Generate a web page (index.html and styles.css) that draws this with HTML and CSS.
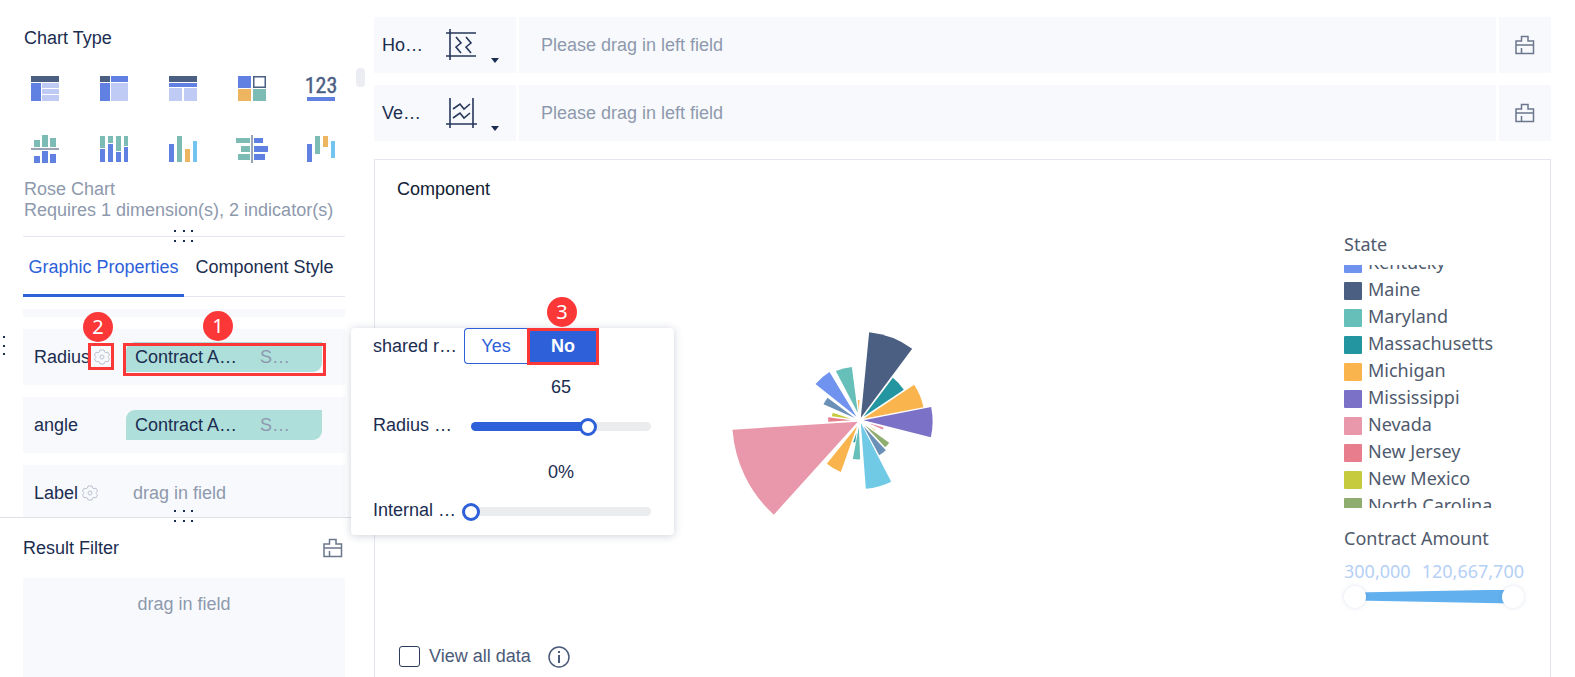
FILE: index.html
```html
<!DOCTYPE html>
<html lang="en">
<head>
    <meta charset="UTF-8">
    <meta name="viewport" content="width=device-width, initial-scale=1.0">
    <title>Rose Chart</title>
    <link rel="stylesheet" href="styles.css">
</head>
<body>
    <!-- Shared icons -->
    <svg class="sprite" aria-hidden="true">
        <symbol id="brush" viewBox="0 0 20 20">
            <path d="M1 18.500V6H6.500V1.500H13V6H18.500V18.500ZM1 10H18.500M6.500 18V13" fill="none" stroke="currentColor" stroke-width="1.500"/>
        </symbol>
        <symbol id="gear" viewBox="0 0 16 16">
            <path d="M6 1H10L10.600 3L12 3.700L14 3.200L15.500 6L14.200 7.500V8.500L15.500 10L14 12.800L12 12.300L10.600 13L10 15H6L5.400 13L4 12.300L2 12.800L.5 10L1.800 8.500V7.500L.5 6L2 3.200L4 3.700L5.400 3Z" fill="none" stroke="currentColor" stroke-linejoin="round"/>
            <circle cx="8" cy="8" r="2" fill="none" stroke="currentColor"/>
        </symbol>
        <symbol id="dots" viewBox="0 0 20 12">
            <path d="M0 0h2v2h-2zM9 0h2v2h-2zM17 0h2v2h-2zM0 10h2v2h-2zM9 10h2v2h-2zM17 10h2v2h-2z" fill="currentColor"/>
        </symbol>
    </svg>

    <div class="designer">
        <aside class="sidebar">
            <section class="chart-types">
                <h2>Chart Type</h2>
                <div class="type-grid">
                    <button aria-label="Group table"><svg viewBox="0 0 28 28"><path fill="#4b5f83" d="M0 1h28v6H0z"/><path fill="#6080e2" d="M0 8h10v18H0z"/><path fill="#bfcbf5" d="M11 8h17v5H11zM11 14h17v5H11zM11 20h17v6H11z"/></svg></button>
                    <button aria-label="Cross table"><svg viewBox="0 0 28 28"><path fill="#4b5f83" d="M0 1h10v6H0z"/><path fill="#6080e2" d="M11 1h17v6H11zM0 8h10v18H0z"/><path fill="#bfcbf5" d="M11 8h17v18H11z"/></svg></button>
                    <button aria-label="Detail table"><svg viewBox="0 0 28 28"><path fill="#4b5f83" d="M0 1h28v6H0z"/><path fill="#6080e2" d="M0 8h28v4H0z"/><path fill="#bfcbf5" d="M0 13h13v13H0zM15 13h13v13H15z"/></svg></button>
                    <button aria-label="Color table"><svg viewBox="0 0 28 28"><path fill="#6080e2" d="M0 1h13v12H0z"/><path fill="none" stroke="#4b5f83" stroke-width="1.500" d="M15.750 1.750h11.500v10.500h-11.500z"/><path fill="#edb55f" d="M0 14h13v12H0z"/><path fill="#7cbcb4" d="M15 14h13v12H15z"/></svg></button>
                    <button aria-label="KPI card"><svg viewBox="0 0 28 28"><text class="kpi" x="14" y="18" text-anchor="middle">123</text><path fill="#6080e2" d="M0 22h28v4H0z"/></svg></button>
                    <button aria-label="Contrast column chart"><svg viewBox="0 0 28 28"><path fill="#7cbcb4" d="M3 5h6v7H3zM11 0h6v12H11zM19 3h6v9H19z"/><path fill="#9ba4b6" d="M0 13h28v2H0z"/><path fill="#6080e2" d="M3 21h6v7H3zM11 16h6v12H11zM19 19h6v9H19z"/></svg></button>
                    <button aria-label="Stacked column chart"><svg viewBox="0 0 28 28"><path fill="#7cbcb4" d="M0 1h5v12H0zM8 1h5v7H8zM16 1h5v15H16zM24 1h4v10H24z"/><path fill="#6080e2" d="M0 14h5v13H0zM8 9h5v18H8zM16 17h5v10H16zM24 12h4v15H24z"/></svg></button>
                    <button aria-label="Column chart"><svg viewBox="0 0 28 28"><path fill="#6080e2" d="M0 9h5v18H0z"/><path fill="#7cbcb4" d="M8 1h5v26H8z"/><path fill="#edb55f" d="M16 14h5v13H16z"/><path fill="#73c4f1" d="M24 6h4v21H24z"/></svg></button>
                    <button aria-label="Contrast bar chart"><svg viewBox="0 0 28 28"><path fill="#7cbcb4" d="M-2 3h14v5H-2zM3 11h9v6H3zM0 19h12v6H0z"/><path fill="#9ba4b6" d="M13 0h2v28H13z"/><path fill="#6080e2" d="M16 3h9v5H16zM16 11h14v6H16zM16 19h11v6H16z"/></svg></button>
                    <button aria-label="Waterfall chart"><svg viewBox="0 0 28 28"><path fill="#6080e2" d="M0 9h5v18H0z"/><path fill="#7cbcb4" d="M8 1h5v18H8z"/><path fill="#edb55f" d="M16 1h5v11H16z"/><path fill="#73c4f1" d="M24 6h4v17H24z"/></svg></button>
                </div>
                <p class="hint">Rose Chart<br>Requires 1 dimension(s), 2 indicator(s)</p>
                <span class="scroll-thumb"></span>
                <svg class="grip"><use href="#dots"/></svg>
            </section>

            <div class="tabs" role="tablist">
                <button role="tab" class="tab active" aria-selected="true">Graphic Properties</button>
                <button role="tab" class="tab" aria-selected="false">Component Style</button>
            </div>

            <div class="props">
                <div class="prop"></div>
                <div class="prop">
                    <span class="prop-name">Radius
                        <button class="gear marked" aria-label="Radius settings"><svg><use href="#gear"/></svg></button>
                        <span class="step step-2">2</span>
                    </span>
                    <div class="field-wrap marked">
                        <div class="field"><span>Contract A…</span><span class="agg">S…</span></div>
                        <span class="step step-1">1</span>
                    </div>
                </div>
                <div class="prop">
                    <span class="prop-name">angle</span>
                    <div class="field-wrap">
                        <div class="field"><span>Contract A…</span><span class="agg">S…</span></div>
                    </div>
                </div>
                <div class="prop">
                    <span class="prop-name">Label
                        <button class="gear" aria-label="Label settings"><svg><use href="#gear"/></svg></button>
                    </span>
                    <span class="empty">drag in field</span>
                </div>
            </div>

            <section class="filter">
                <svg class="grip"><use href="#dots"/></svg>
                <header>
                    <h2>Result Filter</h2>
                    <button class="clear" aria-label="Clear filter"><svg><use href="#brush"/></svg></button>
                </header>
                <div class="drop-area">drag in field</div>
            </section>

            <svg class="side-grip" viewBox="0 0 2 20"><path d="M0 0h2v2h-2zM0 9h2v2h-2zM0 17h2v2h-2z" fill="currentColor"/></svg>
        </aside>

        <main class="main">
            <div class="shelf">
                <button class="axis">
                    <span>Ho…</span>
                    <svg class="axis-icon" viewBox="0 0 32 32"><path d="M0 4h30M0 27h30M4 0v31M10 8l5 6-5 4 5 6M20 8l5 6-5 4 5 6"/></svg>
                    <i class="caret"></i>
                </button>
                <div class="shelf-drop">Please drag in left field</div>
                <button class="shelf-clear" aria-label="Clear horizontal axis"><svg><use href="#brush"/></svg></button>
            </div>
            <div class="shelf">
                <button class="axis">
                    <span>Ve…</span>
                    <svg class="axis-icon" viewBox="0 0 32 32"><path d="M4 1v30M27 1v30M0 27h31M7 12l7-5 4 5 6-5M7 21l7-5 4 5 6-5"/></svg>
                    <i class="caret"></i>
                </button>
                <div class="shelf-drop">Please drag in left field</div>
                <button class="shelf-clear" aria-label="Clear vertical axis"><svg><use href="#brush"/></svg></button>
            </div>

            <section class="component">
                <h2>Component</h2>
                <div class="component-body">
                    <svg class="rose" viewBox="28 -87 780 780" role="img" aria-label="Rose chart">
                        <path fill="#4b5f83" d="M422 293L447 37A268 268 0 0 1 576 86Z"/>
                        <path fill="#2395a0" d="M430 290L518 173A162 162 0 0 1 551 209Z"/>
                        <path fill="#fab44e" d="M430 296L582 194A197 197 0 0 1 610 262Z"/>
                        <path fill="#7b71c6" d="M430 301L633 261A218 218 0 0 1 632 352Z"/>
                        <path fill="#e896aa" d="M446 310L490 322L488 329Z"/>
                        <path fill="#f2e3a0" d="M446 317L467 330L464 333Z"/>
                        <path fill="#8fad6f" d="M434 316L507 368A110 110 0 0 1 495 382Z"/>
                        <path fill="#6b90b8" d="M430 319L497 391A120 120 0 0 1 477 406Z"/>
                        <path fill="#70c9e5" d="M422 309L513 485A204 204 0 0 1 437 506Z"/>
                        <path fill="#66bfb8" d="M416 320L420 418A116 116 0 0 1 398 417Z"/>
                        <path fill="#2395a0" d="M409 338L405 367L399 367Z"/>
                        <path fill="#fab44e" d="M411 318L362 456A162 162 0 0 1 320 431Z"/>
                        <path fill="#e998ab" d="M413 305L161 584A382 382 0 0 1 37 329Z"/>
                        <path fill="#e87e8d" d="M392 301L324 305V292Z"/>
                        <path fill="#c5cb3c" d="M392 296L335 289L338 278Z"/>
                        <path fill="#6b90b8" d="M404 294L310 253A118 118 0 0 1 322 233Z"/>
                        <path fill="#6f93ee" d="M409 290L286 192A172 172 0 0 1 328 156Z"/>
                        <path fill="#66bfb8" d="M413 279L347 153A166 166 0 0 1 395 141Z"/>
                        <path fill="#fab44e" d="M413 240H418L416 272Z"/>
                    </svg>

                    <div class="legend">
                        <h3>State</h3>
                        <ul>
                            <li><i class="kentucky"></i>Kentucky</li>
                            <li><i class="maine"></i>Maine</li>
                            <li><i class="maryland"></i>Maryland</li>
                            <li><i class="massachusetts"></i>Massachusetts</li>
                            <li><i class="michigan"></i>Michigan</li>
                            <li><i class="mississippi"></i>Mississippi</li>
                            <li><i class="nevada"></i>Nevada</li>
                            <li><i class="new-jersey"></i>New Jersey</li>
                            <li><i class="new-mexico"></i>New Mexico</li>
                            <li><i class="north-carolina"></i>North Carolina</li>
                        </ul>
                        <h3>Contract Amount</h3>
                        <div class="amounts"><span>300,000</span><span>120,667,700</span></div>
                        <div class="amount-range"><i></i><i></i></div>
                    </div>
                </div>
                <footer>
                    <input type="checkbox" id="viewAll">
                    <label for="viewAll">View all data</label>
                    <svg class="info" viewBox="0 0 22 22"><circle cx="11" cy="11" r="10" fill="none" stroke="currentColor" stroke-width="1.500"/><path d="M10 9h2v8h-2zM10 5h2v2h-2z" fill="currentColor"/></svg>
                </footer>
            </section>
        </main>

        <!-- Radius settings popup -->
        <div class="popup">
            <div class="popup-row toggle-row">
                <span class="popup-label">shared r…</span>
                <div class="toggle">
                    <button>Yes</button>
                    <button class="on">No</button>
                    <span class="step step-3">3</span>
                </div>
            </div>
            <output for="radius">65</output>
            <div class="popup-row">
                <label class="popup-label" for="radius">Radius …</label>
                <div class="slider" style="--value: 65%"><input type="range" id="radius" min="0" max="100" value="65"></div>
            </div>
            <output for="internal">0%</output>
            <div class="popup-row">
                <label class="popup-label" for="internal">Internal …</label>
                <div class="slider" style="--value: 0%"><input type="range" id="internal" min="0" max="100" value="0"></div>
            </div>
        </div>
    </div>
</body>
</html>
```
FILE: styles.css
```css
* {
    box-sizing: border-box;
}
body {
    margin: 0;
    font-family: "Liberation Sans", Arial, sans-serif;
    font-size: 18px;
    line-height: 21px;
    color: #1b2d50;
    background: #fff;
    overflow: hidden;
}
h2, h3, p, ul {
    margin: 0;
    padding: 0;
    font-size: inherit;
    font-weight: normal;
}
button {
    font: inherit;
    color: inherit;
    background: none;
    border: none;
    padding: 0;
    cursor: pointer;
}
svg {
    display: block;
    overflow: visible;
}
.sprite {
    position: absolute;
    width: 0;
    height: 0;
}
.designer {
    position: relative;
    display: flex;
    height: 100vh;
}

/* Left side */
.sidebar {
    position: relative;
    flex: none;
    width: 374px;
    display: flex;
    flex-direction: column;
}
.chart-types {
    position: relative;
    margin: 0 29px 0 23px;
    padding: 28px 0 15px;
    border-bottom: 1px solid #e4e6ef;
}
.chart-types h2, .hint {
    padding-left: 1px;
}
.type-grid {
    display: grid;
    grid-template-columns: repeat(5, 28px);
    justify-content: space-between;
    row-gap: 32px;
    padding: 0 10px 0 8px;
    margin: 26px 0 16px;
}
.type-grid svg {
    width: 28px;
    height: 28px;
}
.kpi {
    font-family: "Liberation Sans Narrow", "Roboto Condensed", Roboto, sans-serif;
    font-size: 22px;
    fill: #4b5f83;
    stroke: #4b5f83;
    stroke-width: 0.4;
}
.hint {
    color: #8e99ad;
    white-space: nowrap;
}
.scroll-thumb {
    position: absolute;
    top: 68px;
    right: -20px;
    width: 9px;
    height: 19px;
    border-radius: 4px;
    background: #ecedf2;
}
.grip {
    position: absolute;
    left: 151px;
    bottom: -6px;
    width: 20px;
    height: 12px;
}
.side-grip {
    position: absolute;
    left: 3px;
    top: 336px;
    width: 2px;
    height: 20px;
}
.tabs {
    display: flex;
    margin: 0 29px 12px 23px;
    height: 60px;
    border-bottom: 1px solid #e4e6ef;
}
.tab {
    flex: 1;
    padding-top: 2px;
    white-space: nowrap;
}
.tab.active {
    color: #2d60d9;
    border-bottom: 3px solid #2d60d9;
    margin-bottom: -1px;
    padding-top: 4px;
}

/* Properties */
.props {
    flex: 1;
    min-height: 0;
    overflow: hidden;
    margin: 0 29px 0 23px;
}
.prop {
    display: flex;
    align-items: center;
    height: 56px;
    margin-bottom: 12px;
    padding-left: 11px;
    background: #f8f9fd;
}
.prop:first-child {
    margin-top: -48px;
}
.prop-name {
    position: relative;
    display: flex;
    align-items: center;
    gap: 4px;
    width: 92px;
}
.gear {
    position: relative;
    color: #bcc2cf;
}
.gear svg {
    width: 16px;
    height: 16px;
}
.marked::after {
    content: "";
    position: absolute;
    border: 3px solid #fb3837;
}
.gear.marked::after {
    inset: -6px -4px -5px -6px;
}
.field-wrap {
    position: relative;
    width: 196px;
}
.field-wrap.marked::after {
    inset: 1px -4px -4px -3px;
}
.field {
    display: flex;
    align-items: center;
    height: 30px;
    padding-left: 9px;
    gap: 23px;
    background: #aedfdb;
    border-radius: 9px 0;
}
.agg, .empty {
    color: #8e99ad;
}
.empty {
    padding-left: 7px;
}
.step {
    position: absolute;
    width: 30px;
    height: 30px;
    border-radius: 50%;
    background: #fb3837;
    color: #fff;
    font: 20px/29px "Noto Sans", sans-serif;
    text-align: center;
    z-index: 1;
}
.step-1 {
    left: 77px;
    top: -31px;
}
.step-2 {
    left: 49px;
    top: -35px;
}
.step-3 {
    right: 22px;
    top: -31px;
}

/* Result filter */
.filter {
    position: relative;
    display: flex;
    flex-direction: column;
    flex: none;
    height: 160px;
    padding: 0 29px 0 23px;
    border-top: 1px solid #dfe1e8;
}
.filter .grip {
    left: 174px;
    bottom: auto;
    top: -8px;
}
.filter header {
    display: flex;
    justify-content: space-between;
    align-items: center;
    height: 60px;
    padding-right: 2px;
}
.clear svg, .shelf-clear svg {
    width: 20px;
    height: 20px;
    color: #6b778c;
}
.drop-area {
    flex: 1;
    padding-top: 16px;
    text-align: center;
    color: #8e99ad;
    background: #f8f9fd;
}

/* Right side */
.main {
    flex: 1;
    min-width: 0;
    display: flex;
    flex-direction: column;
    padding: 17px 24px 0 0;
}
.shelf {
    display: flex;
    gap: 3px;
    height: 56px;
    margin-bottom: 12px;
}
.shelf > * {
    background: #f8f9fd;
}
.axis {
    position: relative;
    display: flex;
    align-items: center;
    justify-content: space-between;
    width: 142px;
    padding: 0 38px 0 8px;
}
.axis-icon {
    width: 32px;
    height: 32px;
    fill: none;
    stroke: #26375a;
    stroke-width: 1.6;
}
.caret {
    position: absolute;
    right: 17px;
    bottom: 10px;
    border: 4px solid transparent;
    border-top: 5px solid #1b2d50;
    border-bottom: none;
}
.shelf-drop {
    flex: 1;
    padding: 18px 22px;
    color: #8e99ad;
}
.shelf-clear {
    display: flex;
    align-items: center;
    justify-content: center;
    width: 52px;
}
.component {
    flex: 1;
    display: flex;
    flex-direction: column;
    margin-top: 6px;
    border: 1px solid #e4e6ef;
    border-bottom: none;
}
.component h2 {
    padding: 19px 22px 17px;
    color: #0f2033;
}
.component-body {
    flex: 1;
    display: flex;
    align-items: center;
}
.rose {
    flex: 1;
    min-width: 0;
    height: 260px;
}
.legend {
    width: 206px;
    margin-bottom: 2px;
    padding-right: 26px;
    font: 18px/27px "Noto Sans", "Open Sans", sans-serif;
    color: #4f5a6d;
}
.legend ul {
    height: 243px;
    margin: 7px 0 17px;
    overflow: hidden;
    list-style: none;
}
.legend li {
    display: flex;
    align-items: center;
    gap: 6px;
    white-space: nowrap;
}
.legend li:first-child {
    margin-top: -16px;
}
.legend li i {
    flex: none;
    width: 18px;
    height: 18px;
    margin-top: 4px;
    border-radius: 1px;
}
.kentucky { background: #6f93ee; }
.maine { background: #4b5f83; }
.maryland { background: #66bfb8; }
.massachusetts { background: #2395a0; }
.michigan { background: #fab44e; }
.mississippi { background: #7b71c6; }
.nevada { background: #e998ab; }
.new-jersey { background: #e87e8d; }
.new-mexico { background: #c5cb3c; }
.north-carolina { background: #8fad6f; }
.amounts {
    display: flex;
    justify-content: space-between;
    margin-top: 6px;
    color: #b5d0f5;
}
.amount-range {
    position: relative;
    display: flex;
    justify-content: space-between;
    align-items: center;
    height: 24px;
}
.amount-range::before {
    content: "";
    position: absolute;
    inset: 5px 12px;
    background: #62b0ee;
    clip-path: polygon(0 22%, 100% 0, 100% 100%, 0 78%);
}
.amount-range i {
    position: relative;
    width: 22px;
    height: 22px;
    border-radius: 50%;
    background: #fff;
    box-shadow: 0 0 4px rgba(80, 110, 160, 0.2);
}
.component footer {
    display: flex;
    align-items: center;
    height: 53px;
    padding: 12px 24px 0;
    color: #4a5a78;
}
.component footer input {
    appearance: none;
    width: 21px;
    height: 21px;
    margin: 0 9px 0 0;
    border: 1px solid #2c3b59;
    border-radius: 3px;
}
.info {
    width: 22px;
    height: 22px;
    margin-left: 17px;
}

/* Popup */
.popup {
    position: absolute;
    left: 351px;
    top: 328px;
    width: 323px;
    height: 207px;
    padding: 0 23px 0 22px;
    background: #fff;
    border-radius: 4px;
    box-shadow: 0 1px 8px rgba(30, 45, 80, 0.22);
}
.popup-row {
    display: flex;
    align-items: center;
    height: 37px;
}
.popup-label {
    width: 98px;
    white-space: nowrap;
}
.toggle-row .popup-label {
    width: 91px;
}
.toggle {
    position: relative;
    display: flex;
    align-self: stretch;
    width: 135px;
}
.toggle button {
    width: 63px;
    height: 36px;
    color: #2d60d9;
    border: 1px solid #2d60d9;
    border-right: none;
    border-radius: 4px 0 0 4px;
}
.toggle .on {
    flex: 1;
    height: 37px;
    color: #fff;
    font-weight: bold;
    background: #2d60d9;
    border: 3px solid #fb3837;
    border-radius: 0;
}
.popup output {
    display: block;
    margin: 18px 0 9px 98px;
    text-align: center;
}
.popup .toggle-row + output {
    margin-top: 12px;
}
.slider {
    flex: 1;
    height: 9px;
    margin-top: 2px;
    border-radius: 5px;
    background: linear-gradient(to right, #2d60d9 var(--value), #ebecee var(--value));
}
.slider input {
    appearance: none;
    display: block;
    width: calc(100% + 18px);
    height: 9px;
    margin: 0 -9px;
    background: none;
}
.slider input::-webkit-slider-thumb {
    appearance: none;
    width: 18px;
    height: 18px;
    border: 3px solid #2d60d9;
    border-radius: 50%;
    background: #fff;
}
```
